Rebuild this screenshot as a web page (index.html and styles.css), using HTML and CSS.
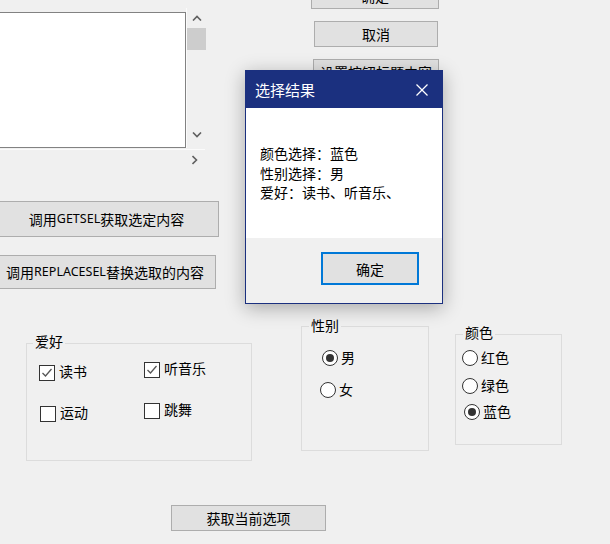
FILE: index.html
```html
<!DOCTYPE html>
<html lang="zh-CN">
<head>
<meta charset="utf-8">
<title>选择结果</title>
<link rel="stylesheet" href="styles.css">
</head>
<body>
<div class="page">
  <div class="top">
    <div class="listarea">
      <div class="listrow">
        <div class="list"></div>
        <div class="vscroll">
          <div class="sb-btn"><svg width="10" height="6" viewBox="0 0 10 6"><polyline points="1,5.5 5,1.5 9,5.5" class="chev"/></svg></div>
          <div class="thumb"></div>
          <div class="sb-fill"></div>
          <div class="sb-btn"><svg width="10" height="6" viewBox="0 0 10 6"><polyline points="1,0.5 5,4.5 9,0.5" class="chev"/></svg></div>
        </div>
      </div>
      <div class="hscroll">
        <div class="sb-btn sb-right"><svg width="6" height="10" viewBox="0 0 6 10"><polyline points="0.5,1 4.5,5 0.5,9" class="chev"/></svg></div>
      </div>
    </div>
    <div class="btncol">
      <div class="btn btn-ok">确定</div>
      <div class="btn btn-cancel">取消</div>
      <div class="btn btn-set">设置按钮标题内容</div>
    </div>
  </div>

  <div class="btn btn-getsel">调用<span class="latin">GETSEL</span>获取选定内容</div>
  <div class="btn btn-replace">调用<span class="latin">REPLACESEL</span>替换选取的内容</div>

  <div class="groups">
    <div class="group group-hobby">
      <div class="group-title">爱好</div>
      <div class="hobby-grid">
        <div class="opt opt-low"><span class="box"><svg width="14" height="14" viewBox="0 0 14 14"><polyline points="2.5,7 5.5,10 11.5,3" class="tick"/></svg></span><span class="opt-text">读书</span></div>
        <div class="opt"><span class="box"><svg width="14" height="14" viewBox="0 0 14 14"><polyline points="2.5,7 5.5,10 11.5,3" class="tick"/></svg></span><span class="opt-text">听音乐</span></div>
        <div class="opt opt-low opt-shift"><span class="box"></span><span class="opt-text">运动</span></div>
        <div class="opt"><span class="box"></span><span class="opt-text">跳舞</span></div>
      </div>
    </div>

    <div class="group group-sex">
      <div class="group-title">性别</div>
      <div class="radio-list sex-list">
        <div class="opt radio-male"><span class="radio checked"></span><span class="radio-text">男</span></div>
        <div class="opt"><span class="radio"></span><span class="radio-text">女</span></div>
      </div>
    </div>

    <div class="group group-color">
      <div class="group-title">颜色</div>
      <div class="radio-list color-list">
        <div class="opt"><span class="radio"></span><span class="radio-text">红色</span></div>
        <div class="opt"><span class="radio"></span><span class="radio-text">绿色</span></div>
        <div class="opt radio-blue"><span class="radio checked"></span><span class="radio-text">蓝色</span></div>
      </div>
    </div>
  </div>

  <div class="btn btn-current">获取当前选项</div>

  <div class="dialog">
    <div class="dlg-title">
      <span>选择结果</span>
      <svg class="dlg-close" width="12" height="12" viewBox="0 0 12 12"><line x1="0.5" y1="0.5" x2="11.5" y2="11.5"/><line x1="11.5" y1="0.5" x2="0.5" y2="11.5"/></svg>
    </div>
    <div class="dlg-body">
      <p>颜色选择：蓝色</p>
      <p>性别选择：男</p>
      <p>爱好：读书、听音乐、</p>
    </div>
    <div class="dlg-foot">
      <div class="dlg-ok">确定</div>
    </div>
  </div>
</div>
</body>
</html>
```

FILE: styles.css
```css
* { box-sizing: border-box; }

html, body {
  margin: 0;
  padding: 0;
  background: #f0f0f0;
}

body {
  font-family: "Noto Sans CJK SC", "Noto Sans", sans-serif;
  font-size: 14px;
  line-height: 16px;
  color: #000;
}

.page {
  position: relative;
  width: 610px;
  height: 544px;
  overflow: hidden;
}

/* ---------- top area ---------- */
.top {
  display: flex;
  align-items: flex-start;
}

.listarea {
  margin-left: -10px;
  width: 216px;
}

.listrow {
  display: flex;
  align-items: flex-start;
}

.list {
  margin-top: 12px;
  width: 196px;
  height: 136px;
  background: #fff;
  border: 1px solid #828282;
}

.vscroll {
  margin-top: 8px;
  width: 20px;
  height: 140px;
  border-left: 1px solid #fbfbfb;
  padding-bottom: 3px;
  display: flex;
  flex-direction: column;
}

.sb-btn {
  height: 20px;
  display: flex;
  align-items: center;
  justify-content: center;
}

.chev {
  fill: none;
  stroke: #606060;
  stroke-width: 1.6;
}

.thumb {
  height: 22px;
  width: 19px;
  background: #cdcdcd;
}

.sb-fill { flex: 1; }

.hscroll {
  margin-top: 1px;
  width: 215px;
  height: 20px;
  border-top: 1px solid #fbfbfb;
  display: flex;
  justify-content: flex-end;
}

.sb-right {
  width: 20px;
  height: 19px;
}

.btncol {
  margin-left: 105px;
  margin-top: -17px;
  display: flex;
  flex-direction: column;
  align-items: flex-start;
  gap: 12px;
}

/* ---------- buttons ---------- */
.btn {
  background: #e1e1e1;
  border: 1px solid #adadad;
  display: flex;
  align-items: center;
  justify-content: center;
  white-space: nowrap;
  height: 26px;
  padding-bottom: 1px;
}

.btn-ok { width: 128px; }
.btn-cancel { width: 124px; margin-left: 3px; }
.btn-set { width: 126px; margin-left: 2px; }

.latin {
  font-family: "Noto Sans", "Open Sans", sans-serif;
  font-size: 12.5px;
}

.btn-getsel {
  margin-top: 32px;
  margin-left: -8px;
  width: 227px;
  height: 36px;
  padding-left: 2px;
}

.btn-replace {
  margin-top: 18px;
  margin-left: -6px;
  width: 222px;
  height: 34px;
}

.btn-current {
  margin-top: 44px;
  margin-left: 171px;
  width: 155px;
  height: 26px;
}

/* ---------- group boxes ---------- */
.groups {
  display: flex;
  align-items: flex-start;
}

.group {
  border: 1px solid #dcdcdc;
}

.group-title {
  margin-top: -10px;
  margin-bottom: -6px;
  margin-left: 7px;
  height: 16px;
  width: fit-content;
  padding: 0 2px;
  background: #f0f0f0;
}

.group-hobby {
  margin-top: 54px;
  margin-left: 26px;
  width: 226px;
  height: 118px;
}

.group-hobby .group-title {
  margin-left: 6px;
  margin-top: -11px;
  margin-bottom: -5px;
}

.group-color .group-title {
  margin-top: -11px;
  margin-bottom: -5px;
}

.group-sex {
  margin-top: 37px;
  margin-left: 49px;
  width: 128px;
  height: 125px;
}

.group-color {
  margin-top: 45px;
  margin-left: 26px;
  width: 107px;
  height: 111px;
}

.hobby-grid {
  display: grid;
  grid-template-columns: 105px auto;
  row-gap: 22px;
  padding-top: 18px;
  padding-left: 12px;
  align-items: start;
}

.opt {
  display: flex;
  align-items: center;
  gap: 4px;
  height: 16px;
  white-space: nowrap;
}

.opt-text {
  line-height: 16px;
  padding-bottom: 5px;
}

.radio-text {
  line-height: 16px;
  padding-bottom: 2px;
}

.opt-low { margin-top: 3px; }
.opt-shift { margin-left: 1px; }

.box {
  width: 16px;
  height: 16px;
  border: 1px solid #333;
  background: #fff;
  display: flex;
  align-items: center;
  justify-content: center;
  flex: none;
}

.tick {
  fill: none;
  stroke: #555;
  stroke-width: 1.3;
}

.radio-list {
  display: flex;
  flex-direction: column;
  align-items: flex-start;
}

.radio-list .opt { gap: 3px; }

.sex-list {
  padding-top: 23px;
  padding-left: 18px;
  gap: 16px;
}

.radio-male { margin-left: 2px; }

.color-list {
  padding-top: 15px;
  padding-left: 6px;
  gap: 12px;
}

.radio-blue {
  margin-top: -2px;
  margin-left: 2px;
}

.radio {
  width: 16px;
  height: 16px;
  border: 1px solid #333;
  border-radius: 50%;
  background: #fff;
  flex: none;
  display: flex;
  align-items: center;
  justify-content: center;
}

.radio.checked::after {
  content: "";
  width: 8px;
  height: 8px;
  border-radius: 50%;
  background: #333;
}

/* ---------- dialog ---------- */
.dialog {
  position: absolute;
  left: 245px;
  top: 70px;
  width: 198px;
  height: 234px;
  border: 1px solid #1b307f;
  background: #f0f0f0;
  box-shadow: 0 4px 18px rgba(0, 0, 0, 0.3);
  display: flex;
  flex-direction: column;
}

.dlg-title {
  height: 37px;
  background: #1b307f;
  color: #fff;
  font-size: 15px;
  display: flex;
  align-items: center;
  justify-content: space-between;
  padding-left: 9px;
  padding-right: 14px;
}

.dlg-close line {
  stroke: #fff;
  stroke-width: 1.2;
}

.dlg-body {
  height: 130px;
  background: #fff;
  padding-top: 36px;
  padding-left: 14px;
}

.dlg-body p {
  margin: 0;
  line-height: 19.5px;
  white-space: nowrap;
}

.dlg-foot {
  flex: 1;
  padding-top: 14px;
  padding-left: 75px;
}

.dlg-ok {
  width: 98px;
  height: 33px;
  border: 2px solid #0078d7;
  background: #e1e1e1;
  display: flex;
  align-items: center;
  justify-content: center;
}
```
